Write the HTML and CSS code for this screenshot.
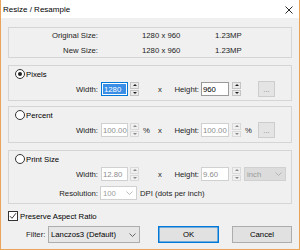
FILE: index.html
```html
<!DOCTYPE html>
<html>
<head>
<meta charset="utf-8">
<link rel="stylesheet" href="styles.css">
</head>
<body>
<div class="win">
  <div class="titlebar">
    <span class="title">Resize / Resample</span>
    <svg class="close" width="8" height="8" viewBox="0 0 8 8"><path d="M0.5 0.5 L7.5 7.5 M7.5 0.5 L0.5 7.5" stroke="#111" stroke-width="0.9" fill="none"/></svg>
  </div>
  <div class="body">
    <div class="group info">
      <div class="irow"><span class="ilabel">Original Size:</span><span class="ival">1280 x 960</span><span class="imp">1.23MP</span></div>
      <div class="irow"><span class="ilabel">New Size:</span><span class="ival">1280 x 960</span><span class="imp">1.23MP</span></div>
    </div>

    <div class="group opt g-pixels">
      <div class="radio-row"><span class="radio on"></span><span class="rtext">Pixels</span></div>
      <div class="crow">
        <span class="lab1">Width:</span>
        <span class="field focus"><span class="sel">1280</span></span>
        <span class="spin"><span class="up"></span><span class="dn"></span></span>
        <span class="unit1"></span>
        <span class="xcell">x</span>
        <span class="lab2">Height:</span>
        <span class="field f2">960</span>
        <span class="spin s2"><span class="up"></span><span class="dn"></span></span>
        <span class="unit2"></span>
        <span class="dots">...</span>
      </div>
    </div>

    <div class="group opt g-percent">
      <div class="radio-row"><span class="radio"></span><span class="rtext">Percent</span></div>
      <div class="crow">
        <span class="lab1">Width:</span>
        <span class="field dis">100.00</span>
        <span class="spin dis"><span class="up"></span><span class="dn"></span></span>
        <span class="unit1">%</span>
        <span class="xcell">x</span>
        <span class="lab2">Height:</span>
        <span class="field f2 dis">100.00</span>
        <span class="spin s2 dis"><span class="up"></span><span class="dn"></span></span>
        <span class="unit2">%</span>
        <span class="dots">...</span>
      </div>
    </div>

    <div class="group opt g-print">
      <div class="radio-row"><span class="radio"></span><span class="rtext">Print Size</span></div>
      <div class="crow">
        <span class="lab1">Width:</span>
        <span class="field dis">12.80</span>
        <span class="spin dis"><span class="up"></span><span class="dn"></span></span>
        <span class="unit1"></span>
        <span class="xcell">x</span>
        <span class="lab2">Height:</span>
        <span class="field f2 dis">9.60</span>
        <span class="spin s2 dis"><span class="up"></span><span class="dn"></span></span>
        <span class="combo unitsel">inch<svg class="chev" width="7" height="4" viewBox="0 0 7 4"><path d="M0.5 0.5 L3.5 3.5 L6.5 0.5" stroke="#a8a8a8" stroke-width="0.8" fill="none"/></svg></span>
      </div>
      <div class="crow rrow">
        <span class="lab1">Resolution:</span>
        <span class="combo ressel">100<svg class="chev" width="7" height="4" viewBox="0 0 7 4"><path d="M0.5 0.5 L3.5 3.5 L6.5 0.5" stroke="#a8a8a8" stroke-width="0.8" fill="none"/></svg></span>
        <span class="dpi">DPI (dots per inch)</span>
      </div>
    </div>

    <div class="check-row">
      <span class="check"><svg width="8" height="8" viewBox="0 0 8 8"><path d="M1 4.2 L3 6.3 L7 1.2" stroke="#222" stroke-width="0.9" fill="none"/></svg></span>
      <span class="ctext">Preserve Aspect Ratio</span>
    </div>

    <div class="bottom-row">
      <span class="flabel">Filter:</span>
      <span class="combo filtersel">Lanczos3 (Default)<svg class="chev" width="7" height="4" viewBox="0 0 7 4"><path d="M0.5 0.5 L3.5 3.5 L6.5 0.5" stroke="#444" stroke-width="0.8" fill="none"/></svg></span>
      <span class="btn ok">OK</span>
      <span class="btn cancel">Cancel</span>
    </div>
  </div>
</div>
</body>
</html>
```
FILE: styles.css
```css
* { box-sizing: border-box; }
html, body { margin: 0; padding: 0; }
body {
  width: 300px;
  height: 250px;
  overflow: hidden;
  font-family: "Liberation Sans", Arial, sans-serif;
  font-size: 7.75px;
  color: #1c1c1c;
  background: #fff;
}
.win {
  width: 300px;
  height: 250px;
  border: 1px solid #eaa45a;
  border-top: none;
  display: flex;
  flex-direction: column;
  background: #f0f0f0;
}
.titlebar {
  height: 18px;
  flex: none;
  background: #fff;
  display: flex;
  align-items: center;
  justify-content: space-between;
  padding: 1px 6px 0 2px;
  font-size: 8px;
  color: #000;
}
.close { display: block; }
.body {
  flex: 1;
  padding: 9px 7px 0 7px;
  display: flex;
  flex-direction: column;
}
.group {
  border: 1px solid #d5d5d5;
  flex: none;
}
.info {
  height: 31px;
  padding-top: 1px;
  display: flex;
  flex-direction: column;
  gap: 1px;
}
.irow { display: flex; align-items: center; height: 14px; white-space: nowrap; }
.ilabel { width: 89px; text-align: right; }
.ival { margin-left: 44px; width: 73px; }

.g-pixels { margin-top: 7px; height: 36px; }
.g-percent { margin-top: 5px; height: 37px; }
.g-print { margin-top: 7px; height: 54px; }

.radio-row {
  display: flex;
  align-items: center;
  height: 10px;
  margin-top: 3px;
  padding-left: 6px;
}
.radio {
  width: 10px;
  height: 10px;
  border: 1px solid #333;
  border-radius: 50%;
  background: #fff;
  display: flex;
  align-items: center;
  justify-content: center;
}
.radio.on::after {
  content: "";
  width: 4px;
  height: 4px;
  border-radius: 50%;
  background: #222;
}
.rtext { margin-left: 1px; color: #000; }

.crow {
  display: flex;
  align-items: center;
  height: 14px;
  margin-top: 3px;
  white-space: nowrap;
}
.rrow { margin-top: 5px; }
.lab1 { width: 89px; text-align: right; flex: none; }
.field {
  flex: none;
  margin-left: 3px;
  width: 27px;
  height: 14px;
  border: 1px solid #9a9a9a;
  background: #fff;
  color: #000;
  padding: 0 1px;
  display: flex;
  align-items: center;
}
.field.f2 { margin-left: 2px; width: 28px; }
.field.dis { border-color: #d0d0d0; color: #8c8c8c; }
.field.focus { border-color: #0078d7; padding: 1px; }
.sel {
  flex: 1;
  height: 100%;
  background: #3a8ee6;
  color: #fff;
  display: flex;
  align-items: center;
  padding-left: 1px;
}
.spin {
  flex: none;
  margin-left: 2px;
  width: 9px;
  height: 14px;
  display: flex;
  flex-direction: column;
  gap: 1px;
}
.spin.s2 { margin-left: 3px; }
.spin .up, .spin .dn {
  flex: 1;
  border: 1px solid #c4c4c4;
  background: #eaeaea;
  display: flex;
  align-items: center;
  justify-content: center;
}
.spin .up::after {
  content: "";
  border-left: 2px solid transparent;
  border-right: 2px solid transparent;
  border-bottom: 2px solid #222;
}
.spin .dn::after {
  content: "";
  border-left: 2px solid transparent;
  border-right: 2px solid transparent;
  border-top: 2px solid #222;
}
.spin.dis .up, .spin.dis .dn { border-color: #dadada; background: #f0f0f0; }
.spin.dis .up::after { border-bottom-color: #888; }
.spin.dis .dn::after { border-top-color: #888; }
.unit1 { flex: none; width: 19px; padding-left: 4px; }
.xcell { flex: none; width: 13px; }
.lab2 { flex: none; width: 28px; text-align: right; }
.unit2 { flex: none; width: 17px; padding-left: 4px; }
.dots {
  flex: none;
  width: 17px;
  height: 16px;
  border: 1px solid #cdcdcd;
  background: #e4e4e4;
  color: #8a8a8a;
  display: flex;
  align-items: center;
  justify-content: center;
}
.combo {
  flex: none;
  display: flex;
  align-items: center;
  justify-content: space-between;
  border: 1px solid #d0d0d0;
  padding: 0 3px 0 2px;
}
.unitsel {
  margin-left: 3px;
  width: 42px;
  height: 14px;
  background: #dcdcdc;
  color: #9a9a9a;
}
.ressel {
  margin-left: 2px;
  width: 37px;
  height: 14px;
  background: #fff;
  color: #9a9a9a;
}
.dpi { margin-left: 3px; }
.check-row {
  display: flex;
  align-items: center;
  height: 10px;
  margin-top: 7px;
  flex: none;
}
.check {
  width: 10px;
  height: 10px;
  border: 1px solid #333;
  background: #fff;
  display: flex;
  align-items: center;
  justify-content: center;
}
.check svg { display: block; }
.ctext { margin-left: 2px; color: #000; }
.bottom-row {
  display: flex;
  align-items: center;
  height: 17px;
  margin-top: 5px;
  flex: none;
}
.flabel { margin-left: 18px; width: 22px; }
.filtersel {
  width: 92px;
  height: 17px;
  background: #e6e6e6;
  border-color: #adadad;
  color: #000;
  padding: 0 3px 0 2px;
}
.btn {
  flex: none;
  height: 17px;
  display: flex;
  align-items: center;
  justify-content: center;
  background: #e1e1e1;
  border: 1px solid #adadad;
  color: #000;
}
.ok { margin-left: 18px; width: 61px; border: 1px solid #0078d7; box-shadow: inset 0 0 0 0.5px #0078d7; }
.cancel { margin-left: 13px; width: 60px; }
```
